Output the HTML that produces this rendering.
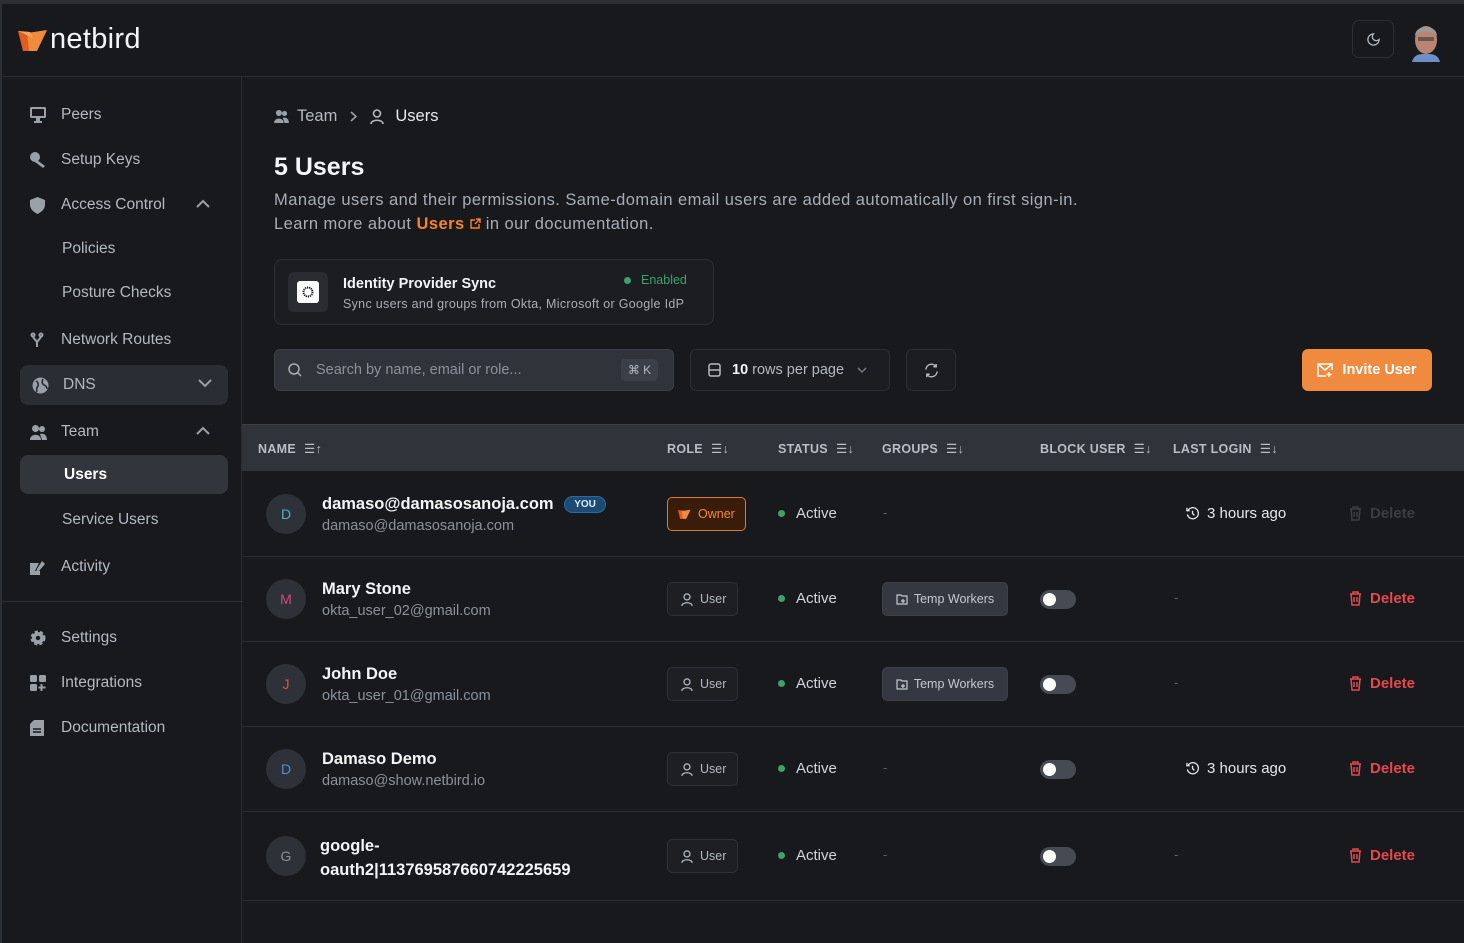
<!DOCTYPE html>
<html><head><meta charset="utf-8"><style>
*{box-sizing:border-box;margin:0;padding:0}
body{width:1464px;height:943px;background:#18191d;font-family:"Liberation Sans",sans-serif;color:#d1d5db;position:relative;overflow:hidden}
.a{position:absolute}
.top{left:0;top:0;width:1464px;height:4px;background:#2b2e33}
.hdr{left:0;top:4px;width:1464px;height:73px;border-bottom:1px solid #2b2e33;border-left:2px solid #2b2e33}
.side{left:0;top:77px;width:242px;height:866px;border-right:1px solid #2b2e33;border-left:2px solid #2b2e33}
.nav{position:absolute;left:16px;width:208px;height:40px;display:flex;align-items:center;font-size:15.5px;color:#b4b9c1;border-radius:8px}
.nav .ic{width:43px;padding-left:12px;display:flex;align-items:center}
.nav.sub{padding-left:44px}
.nav .ch{position:absolute;right:16px;top:14px}
.th{font-size:12.5px;color:#b9bec6;font-weight:bold;letter-spacing:.3px;display:flex;align-items:center;gap:8px}
.row{position:absolute;left:242px;width:1222px;border-bottom:1px solid #2b2e33}
.av{position:absolute;left:24px;width:40px;height:40px;border-radius:50%;background:#2e3138;display:flex;align-items:center;justify-content:center;font-size:14px}
.nm{position:absolute;left:80px;font-size:16.5px;color:#f3f4f6;font-weight:bold}
.em{position:absolute;left:80px;font-size:14.5px;color:#8b919a}
.role{position:absolute;left:425px;height:34px;border:1px solid #2e3138;background:#1d1f23;border-radius:5px;display:flex;align-items:center;gap:7px;padding:0 11px 0 13px;font-size:12.5px;color:#b4b9c1}
.st{position:absolute;left:536px;display:flex;align-items:center;gap:11px;font-size:15px;color:#d1d5db}
.dot{width:7px;height:7px;border-radius:50%;background:#3fa06a}
.grp{position:absolute;left:640px;height:34px;width:126px;background:#353841;border:1px solid #3b3f47;border-radius:5px;display:flex;align-items:center;justify-content:center;gap:6px;font-size:12.5px;color:#c4c8ce}
.tog{position:absolute;left:798px;width:36px;height:19px;border-radius:10px;background:#464a52}
.tog:after{content:"";position:absolute;left:3px;top:3px;width:13px;height:13px;border-radius:50%;background:#fff}
.dash{position:absolute;color:#5b6068;font-size:13px}
.del{position:absolute;left:1107px;display:flex;align-items:center;gap:8px;font-size:15px;color:#e5484d;font-weight:bold}
.ll{position:absolute;left:944px;display:flex;align-items:center;gap:8px;font-size:15px;color:#e5e7eb}
</style></head><body>
<div class="a top"></div>
<div class="a hdr">
 <svg class="a" style="left:16px;top:25px" width="30" height="24" viewBox="0 0 30 24"><path d="M0 2 L12 3 L17 12 L11 22 L5 22 Z" fill="#e05d24"/><path d="M9 4 L29 1 L19 22 L11 22 Z" fill="#f08a3c"/><path d="M0 2 L12 3 L15 9 Z" fill="#f5a35e"/></svg>
 <div class="a" style="left:48px;top:19px;font-size:29px;color:#f3f4f6;letter-spacing:.3px">netbird</div>
 <div class="a" style="left:1350px;top:16px;width:42px;height:38px;border:1px solid #2b2e33;border-radius:7px;display:flex;align-items:center;justify-content:center">
  <svg width="15" height="15" viewBox="0 0 24 24" fill="none" stroke="#b4b9c1" stroke-width="2"><path d="M12 3a6 6 0 0 0 9 9 9 9 0 1 1-9-9Z"/></svg></div>
 <svg class="a" style="left:1408px;top:16px" width="32" height="42" viewBox="0 0 32 42"><path d="M2 42 C4 34 10 34 16 34 C22 34 28 34 30 42Z" fill="#6d8fc7"/><ellipse cx="16" cy="20" rx="11" ry="14" fill="#b98472"/><path d="M5 16 C5 4 27 4 27 16 C24 10 8 10 5 16Z" fill="#9a9a9a"/><rect x="8" y="17" width="16" height="4" fill="#444" opacity=".7"/></svg>
</div>
<div class="a side">
 <div class="nav" style="top:18px"><span class="ic"><svg width="17" height="16" viewBox="0 0 17 16" fill="#9aa0a8"><rect x="0" y="0" width="16" height="11" rx="1.5"/><rect x="2" y="2" width="12" height="7" fill="#18191d"/><rect x="6" y="11" width="4" height="3"/><rect x="4" y="14" width="8" height="2"/></svg></span>Peers</div>
 <div class="nav" style="top:63px"><span class="ic"><svg width="16" height="16" viewBox="0 0 16 16" fill="#9aa0a8"><circle cx="5" cy="5" r="5"/><path d="M7 8 L15 14 L13 16 L5 10Z"/></svg></span>Setup Keys</div>
 <div class="nav" style="top:108px"><span class="ic"><svg width="15" height="17" viewBox="0 0 15 17" fill="#9aa0a8"><path d="M7.5 0 L15 3 V8 C15 12 11 15.5 7.5 17 C4 15.5 0 12 0 8 V3Z"/></svg></span>Access Control<svg class="ch" width="14" height="9" viewBox="0 0 14 9" fill="none" stroke="#9aa0a8" stroke-width="2"><path d="M1 8 L7 2 L13 8"/></svg></div>
 <div class="nav sub" style="top:152px">Policies</div>
 <div class="nav sub" style="top:196px">Posture Checks</div>
 <div class="nav" style="top:243px"><span class="ic"><svg width="14" height="16" viewBox="0 0 14 16" fill="none" stroke="#9aa0a8" stroke-width="2"><circle cx="3" cy="3" r="1.5"/><circle cx="11" cy="3" r="1.5"/><path d="M3 5 L7 10 L11 5 M7 10 V15"/></svg></span>Network Routes</div>
 <div class="nav" style="top:288px;left:18px;background:#2a2d33"><span class="ic"><svg width="17" height="17" viewBox="0 0 17 17"><circle cx="8.5" cy="8.5" r="8" fill="#9aa0a8"/><path d="M4 4 Q7 6 6 9 Q4 11 5 15 M11 2 Q9 6 12 8 Q15 9 15 12" stroke="#2a2d33" stroke-width="1.6" fill="none"/></svg></span>DNS<svg class="ch" width="14" height="9" viewBox="0 0 14 9" fill="none" stroke="#9aa0a8" stroke-width="2"><path d="M1 1 L7 7 L13 1"/></svg></div>
 <div class="nav" style="top:335px"><span class="ic"><svg width="17" height="15" viewBox="0 0 17 15" fill="#9aa0a8"><circle cx="5.5" cy="3.5" r="3.5"/><circle cx="12" cy="4" r="3"/><path d="M0 15 C0 8 11 8 11 15Z M10 9 C14 8 17 10 17 15 H12Z"/></svg></span>Team<svg class="ch" width="14" height="9" viewBox="0 0 14 9" fill="none" stroke="#9aa0a8" stroke-width="2"><path d="M1 8 L7 2 L13 8"/></svg></div>
 <div class="nav sub" style="top:378px;left:18px;background:#32353c;color:#fff;font-weight:bold;height:39px">Users</div>
 <div class="nav sub" style="top:423px">Service Users</div>
 <div class="nav" style="top:470px"><span class="ic"><svg width="16" height="15" viewBox="0 0 16 15" fill="#9aa0a8"><path d="M0 3 H9 L5 11 H10 V15 H0Z"/><path d="M12 1 L15 4 L9 11 L6 12 L7 9Z"/></svg></span>Activity</div>
 <div class="a" style="left:0;top:524px;width:241px;height:1px;background:#2b2e33"></div>
 <div class="nav" style="top:541px"><span class="ic"><svg width="16" height="16" viewBox="0 0 16 16"><circle cx="8" cy="8" r="6" fill="#9aa0a8" stroke="#9aa0a8" stroke-width="3" stroke-dasharray="3 2"/><circle cx="8" cy="8" r="2.2" fill="#18191d"/></svg></span>Settings</div>
 <div class="nav" style="top:586px"><span class="ic"><svg width="16" height="16" viewBox="0 0 16 16" fill="#9aa0a8"><rect x="0" y="0" width="7" height="7" rx="1.5"/><rect x="9" y="0" width="7" height="7" rx="1.5"/><rect x="0" y="9" width="7" height="7" rx="1.5"/><path d="M11.5 9 V16 M8.5 12.5 H15.5" stroke="#9aa0a8" stroke-width="2"/></svg></span>Integrations</div>
 <div class="nav" style="top:631px"><span class="ic"><svg width="14" height="16" viewBox="0 0 14 16" fill="#9aa0a8"><path d="M4 0 H14 V16 H0 V4Z"/><path d="M3 9 H11 M3 12 H11" stroke="#18191d" stroke-width="1.5"/></svg></span>Documentation</div>
</div>

<div class="a" style="left:274px;top:107px;display:flex;align-items:center;font-size:16.5px;color:#b4b9c1">
 <svg width="15" height="13" viewBox="0 0 17 15" fill="#9aa0a8"><circle cx="5.5" cy="3.5" r="3.5"/><circle cx="12" cy="4" r="3"/><path d="M0 15 C0 8 11 8 11 15Z M10 9 C14 8 17 10 17 15 H12Z"/></svg>
 <span style="margin-left:8px">Team</span>
 <svg style="margin:0 13px" width="7" height="11" viewBox="0 0 7 11" fill="none" stroke="#9aa0a8" stroke-width="1.6"><path d="M1 1 L6 5.5 L1 10"/></svg>
 <svg width="14" height="15" viewBox="0 0 14 15" fill="none" stroke="#b4b9c1" stroke-width="1.6"><circle cx="7" cy="4.5" r="3.5"/><path d="M1 15 C1 10 13 10 13 15"/></svg>
 <span style="margin-left:11px;color:#e5e7eb">Users</span>
</div>
<div class="a" style="left:274px;top:153px;font-size:25px;color:#f3f4f6;font-weight:bold">5 Users</div>
<div class="a" style="left:274px;top:188px;font-size:16.5px;line-height:24px;color:#a8adb5;letter-spacing:.45px">Manage users and their permissions. Same-domain email users are added automatically on first sign-in.<br>Learn more about <b style="color:#f68330">Users</b> <svg width="11" height="11" viewBox="0 0 11 11" fill="none" stroke="#f68330" stroke-width="1.4"><path d="M5 2 H1 V10 H9 V6 M6 1 H10 V5 M10 1 L5 6"/></svg> in our documentation.</div>

<div class="a" style="left:274px;top:259px;width:440px;height:66px;border:1px solid #2b2e33;border-radius:8px;background:#1c1d21">
 <div class="a" style="left:13px;top:12px;width:40px;height:40px;border-radius:6px;background:#2a2c31;display:flex;align-items:center;justify-content:center"><div style="width:22px;height:22px;background:#fff;border-radius:3px;display:flex;align-items:center;justify-content:center"><svg width="14" height="14" viewBox="0 0 14 14" fill="none" stroke="#111" stroke-width="2" stroke-dasharray="1.2 .8"><circle cx="7" cy="7" r="4.5"/></svg></div></div>
 <div class="a" style="left:68px;top:16px;font-size:14.5px;font-weight:bold;color:#f3f4f6">Identity Provider Sync</div>
 <div class="a" style="left:68px;top:37px;font-size:12.5px;color:#a8adb5;letter-spacing:.3px">Sync users and groups from Okta, Microsoft or Google IdP</div>
 <div class="a" style="left:349px;top:13px;font-size:12.5px;color:#3fa06a;display:flex;align-items:center;gap:10px"><span class="dot"></span>Enabled</div>
</div>

<div class="a" style="left:274px;top:349px;width:400px;height:42px;border:1px solid #3b3f47;border-radius:6px;background:#30333a;display:flex;align-items:center">
 <svg style="margin-left:13px" width="14" height="14" viewBox="0 0 14 14" fill="none" stroke="#a8adb5" stroke-width="1.5"><circle cx="6" cy="6" r="5"/><path d="M10 10 L13 13"/></svg>
 <span style="margin-left:14px;font-size:14.5px;color:#8b919a">Search by name, email or role...</span>
 <span class="a" style="right:15px;top:9px;width:37px;height:22px;background:#3b3f47;border-radius:4px;font-size:12px;color:#b4b9c1;display:flex;align-items:center;justify-content:center">⌘ K</span>
</div>
<div class="a" style="left:690px;top:349px;width:200px;height:42px;border:1px solid #2b2e33;border-radius:6px;background:#1c1d21;display:flex;align-items:center;font-size:14.5px;color:#b4b9c1">
 <svg style="margin-left:17px" width="13" height="14" viewBox="0 0 13 14" fill="none" stroke="#b4b9c1" stroke-width="1.5"><rect x="1" y="1" width="11" height="12" rx="2"/><path d="M1 7 H12"/></svg>
 <b style="margin-left:11px;color:#f3f4f6">10</b>&nbsp;rows per page
 <svg style="margin-left:13px" width="10" height="6" viewBox="0 0 10 6" fill="none" stroke="#7a8089" stroke-width="1.3"><path d="M1 1 L5 5 L9 1"/></svg>
</div>
<div class="a" style="left:906px;top:349px;width:50px;height:42px;border:1px solid #2b2e33;border-radius:6px;background:#1c1d21;display:flex;align-items:center;justify-content:center">
 <svg width="15" height="15" viewBox="0 0 16 16" fill="none" stroke="#b4b9c1" stroke-width="1.5"><path d="M2 7 A6 6 0 0 1 13 4 M14 9 A6 6 0 0 1 3 12 M13 1 V4 H10 M3 15 V12 H6"/></svg>
</div>
<div class="a" style="left:1302px;top:349px;width:130px;height:42px;border-radius:6px;background:#ef8a3f;display:flex;align-items:center;justify-content:center;gap:9px;font-size:14.5px;font-weight:bold;color:#fff">
 <svg width="16" height="14" viewBox="0 0 16 14" fill="none" stroke="#fff" stroke-width="1.5"><path d="M9 13 H1 V1 H15 V7 M1 1 L8 7 L15 1 M12 9 V14 M9.5 11.5 H14.5"/></svg>Invite User
</div>

<div class="a" style="left:242px;top:424px;width:1222px;height:47px;background:#30333a;border-top:1px solid #3b3f47"></div>
<div class="a th" style="left:258px;top:441px">NAME <span style="font-weight:normal">☰↑</span></div>
<div class="a th" style="left:667px;top:441px">ROLE <span style="font-weight:normal">☰↓</span></div>
<div class="a th" style="left:778px;top:441px">STATUS <span style="font-weight:normal">☰↓</span></div>
<div class="a th" style="left:882px;top:441px">GROUPS <span style="font-weight:normal">☰↓</span></div>
<div class="a th" style="left:1040px;top:441px">BLOCK USER <span style="font-weight:normal">☰↓</span></div>
<div class="a th" style="left:1173px;top:441px">LAST LOGIN <span style="font-weight:normal">☰↓</span></div>

<div class="row" style="top:471px;height:86px">
 <div class="av" style="top:23px;color:#4fb3bf">D</div>
 <div class="nm" style="top:24px">damaso@damasosanoja.com <span style="display:inline-block;margin-left:6px;vertical-align:2px;background:#1b4a72;border:1px solid #2a6aa0;color:#dbeafe;font-size:10px;border-radius:9px;padding:2px 9px">YOU</span></div>
 <div class="em" style="top:47px">damaso@damasosanoja.com</div>
 <div class="role" style="top:26px;border-color:#e07a30;background:#3a1c0a;color:#f08a3c;padding:0 10px"><svg width="13" height="11" viewBox="0 0 30 24"><path d="M0 2 L12 3 L17 12 L11 22 L5 22 Z" fill="#e05d24"/><path d="M9 4 L29 1 L19 22 L11 22 Z" fill="#f08a3c"/></svg>Owner</div>
 <div class="st" style="top:34px"><span class="dot"></span>Active</div>
 <div class="dash" style="left:641px;top:34px">-</div>
 <div class="ll" style="top:34px"><svg width="13" height="13" viewBox="0 0 14 14" fill="none" stroke="#e5e7eb" stroke-width="1.4"><path d="M2 4 A6 6 0 1 1 1.5 8 M1 1 V4 H4 M7 4 V7 L9 9"/></svg>3 hours ago</div>
 <div class="del" style="top:34px;color:#3a3d44"><svg width="13" height="15" viewBox="0 0 13 15" fill="none" stroke="#3a3d44" stroke-width="1.5"><path d="M1 3 H12 M4 3 V1 H9 V3 M2 3 L3 14 H10 L11 3 M5 6 V11 M8 6 V11"/></svg>Delete</div>
</div>
<div class="row" style="top:557px;height:85px">
 <div class="av" style="top:22px;color:#d9457e">M</div>
 <div class="nm" style="top:23px">Mary Stone</div>
 <div class="em" style="top:46px">okta_user_02@gmail.com</div>
 <div class="role" style="top:25px"><svg width="12" height="13" viewBox="0 0 14 15" fill="none" stroke="#b4b9c1" stroke-width="1.5"><circle cx="7" cy="4.5" r="3.5"/><path d="M1 15 C1 10 13 10 13 15"/></svg>User</div>
 <div class="st" style="top:33px"><span class="dot"></span>Active</div>
 <div class="grp" style="top:25px"><svg width="12" height="11" viewBox="0 0 12 11" fill="none" stroke="#c4c8ce" stroke-width="1.2"><path d="M1 1 H5 L6 2 H11 V10 H1Z M7 5 V9 M5 7 H9"/></svg>Temp Workers</div>
 <div class="tog" style="top:33px"></div>
 <div class="dash" style="left:932px;top:33px">-</div>
 <div class="del" style="top:33px"><svg width="13" height="15" viewBox="0 0 13 15" fill="none" stroke="#e5484d" stroke-width="1.5"><path d="M1 3 H12 M4 3 V1 H9 V3 M2 3 L3 14 H10 L11 3 M5 6 V11 M8 6 V11"/></svg>Delete</div>
</div>
<div class="row" style="top:642px;height:85px">
 <div class="av" style="top:22px;color:#d9573f">J</div>
 <div class="nm" style="top:23px">John Doe</div>
 <div class="em" style="top:46px">okta_user_01@gmail.com</div>
 <div class="role" style="top:25px"><svg width="12" height="13" viewBox="0 0 14 15" fill="none" stroke="#b4b9c1" stroke-width="1.5"><circle cx="7" cy="4.5" r="3.5"/><path d="M1 15 C1 10 13 10 13 15"/></svg>User</div>
 <div class="st" style="top:33px"><span class="dot"></span>Active</div>
 <div class="grp" style="top:25px"><svg width="12" height="11" viewBox="0 0 12 11" fill="none" stroke="#c4c8ce" stroke-width="1.2"><path d="M1 1 H5 L6 2 H11 V10 H1Z M7 5 V9 M5 7 H9"/></svg>Temp Workers</div>
 <div class="tog" style="top:33px"></div>
 <div class="dash" style="left:932px;top:33px">-</div>
 <div class="del" style="top:33px"><svg width="13" height="15" viewBox="0 0 13 15" fill="none" stroke="#e5484d" stroke-width="1.5"><path d="M1 3 H12 M4 3 V1 H9 V3 M2 3 L3 14 H10 L11 3 M5 6 V11 M8 6 V11"/></svg>Delete</div>
</div>
<div class="row" style="top:727px;height:85px">
 <div class="av" style="top:22px;color:#4f8fd0">D</div>
 <div class="nm" style="top:23px">Damaso Demo</div>
 <div class="em" style="top:46px">damaso@show.netbird.io</div>
 <div class="role" style="top:25px"><svg width="12" height="13" viewBox="0 0 14 15" fill="none" stroke="#b4b9c1" stroke-width="1.5"><circle cx="7" cy="4.5" r="3.5"/><path d="M1 15 C1 10 13 10 13 15"/></svg>User</div>
 <div class="st" style="top:33px"><span class="dot"></span>Active</div>
 <div class="dash" style="left:641px;top:33px">-</div>
 <div class="tog" style="top:33px"></div>
 <div class="ll" style="top:33px"><svg width="13" height="13" viewBox="0 0 14 14" fill="none" stroke="#e5e7eb" stroke-width="1.4"><path d="M2 4 A6 6 0 1 1 1.5 8 M1 1 V4 H4 M7 4 V7 L9 9"/></svg>3 hours ago</div>
 <div class="del" style="top:33px"><svg width="13" height="15" viewBox="0 0 13 15" fill="none" stroke="#e5484d" stroke-width="1.5"><path d="M1 3 H12 M4 3 V1 H9 V3 M2 3 L3 14 H10 L11 3 M5 6 V11 M8 6 V11"/></svg>Delete</div>
</div>
<div class="row" style="top:812px;height:89px">
 <div class="av" style="top:24px;color:#8b919a">G</div>
 <div class="nm" style="top:22px;left:78px;line-height:24px">google-<br>oauth2|113769587660742225659</div>
 <div class="role" style="top:27px"><svg width="12" height="13" viewBox="0 0 14 15" fill="none" stroke="#b4b9c1" stroke-width="1.5"><circle cx="7" cy="4.5" r="3.5"/><path d="M1 15 C1 10 13 10 13 15"/></svg>User</div>
 <div class="st" style="top:35px"><span class="dot"></span>Active</div>
 <div class="dash" style="left:641px;top:35px">-</div>
 <div class="tog" style="top:35px"></div>
 <div class="dash" style="left:932px;top:35px">-</div>
 <div class="del" style="top:35px"><svg width="13" height="15" viewBox="0 0 13 15" fill="none" stroke="#e5484d" stroke-width="1.5"><path d="M1 3 H12 M4 3 V1 H9 V3 M2 3 L3 14 H10 L11 3 M5 6 V11 M8 6 V11"/></svg>Delete</div>
</div>
</body></html>
